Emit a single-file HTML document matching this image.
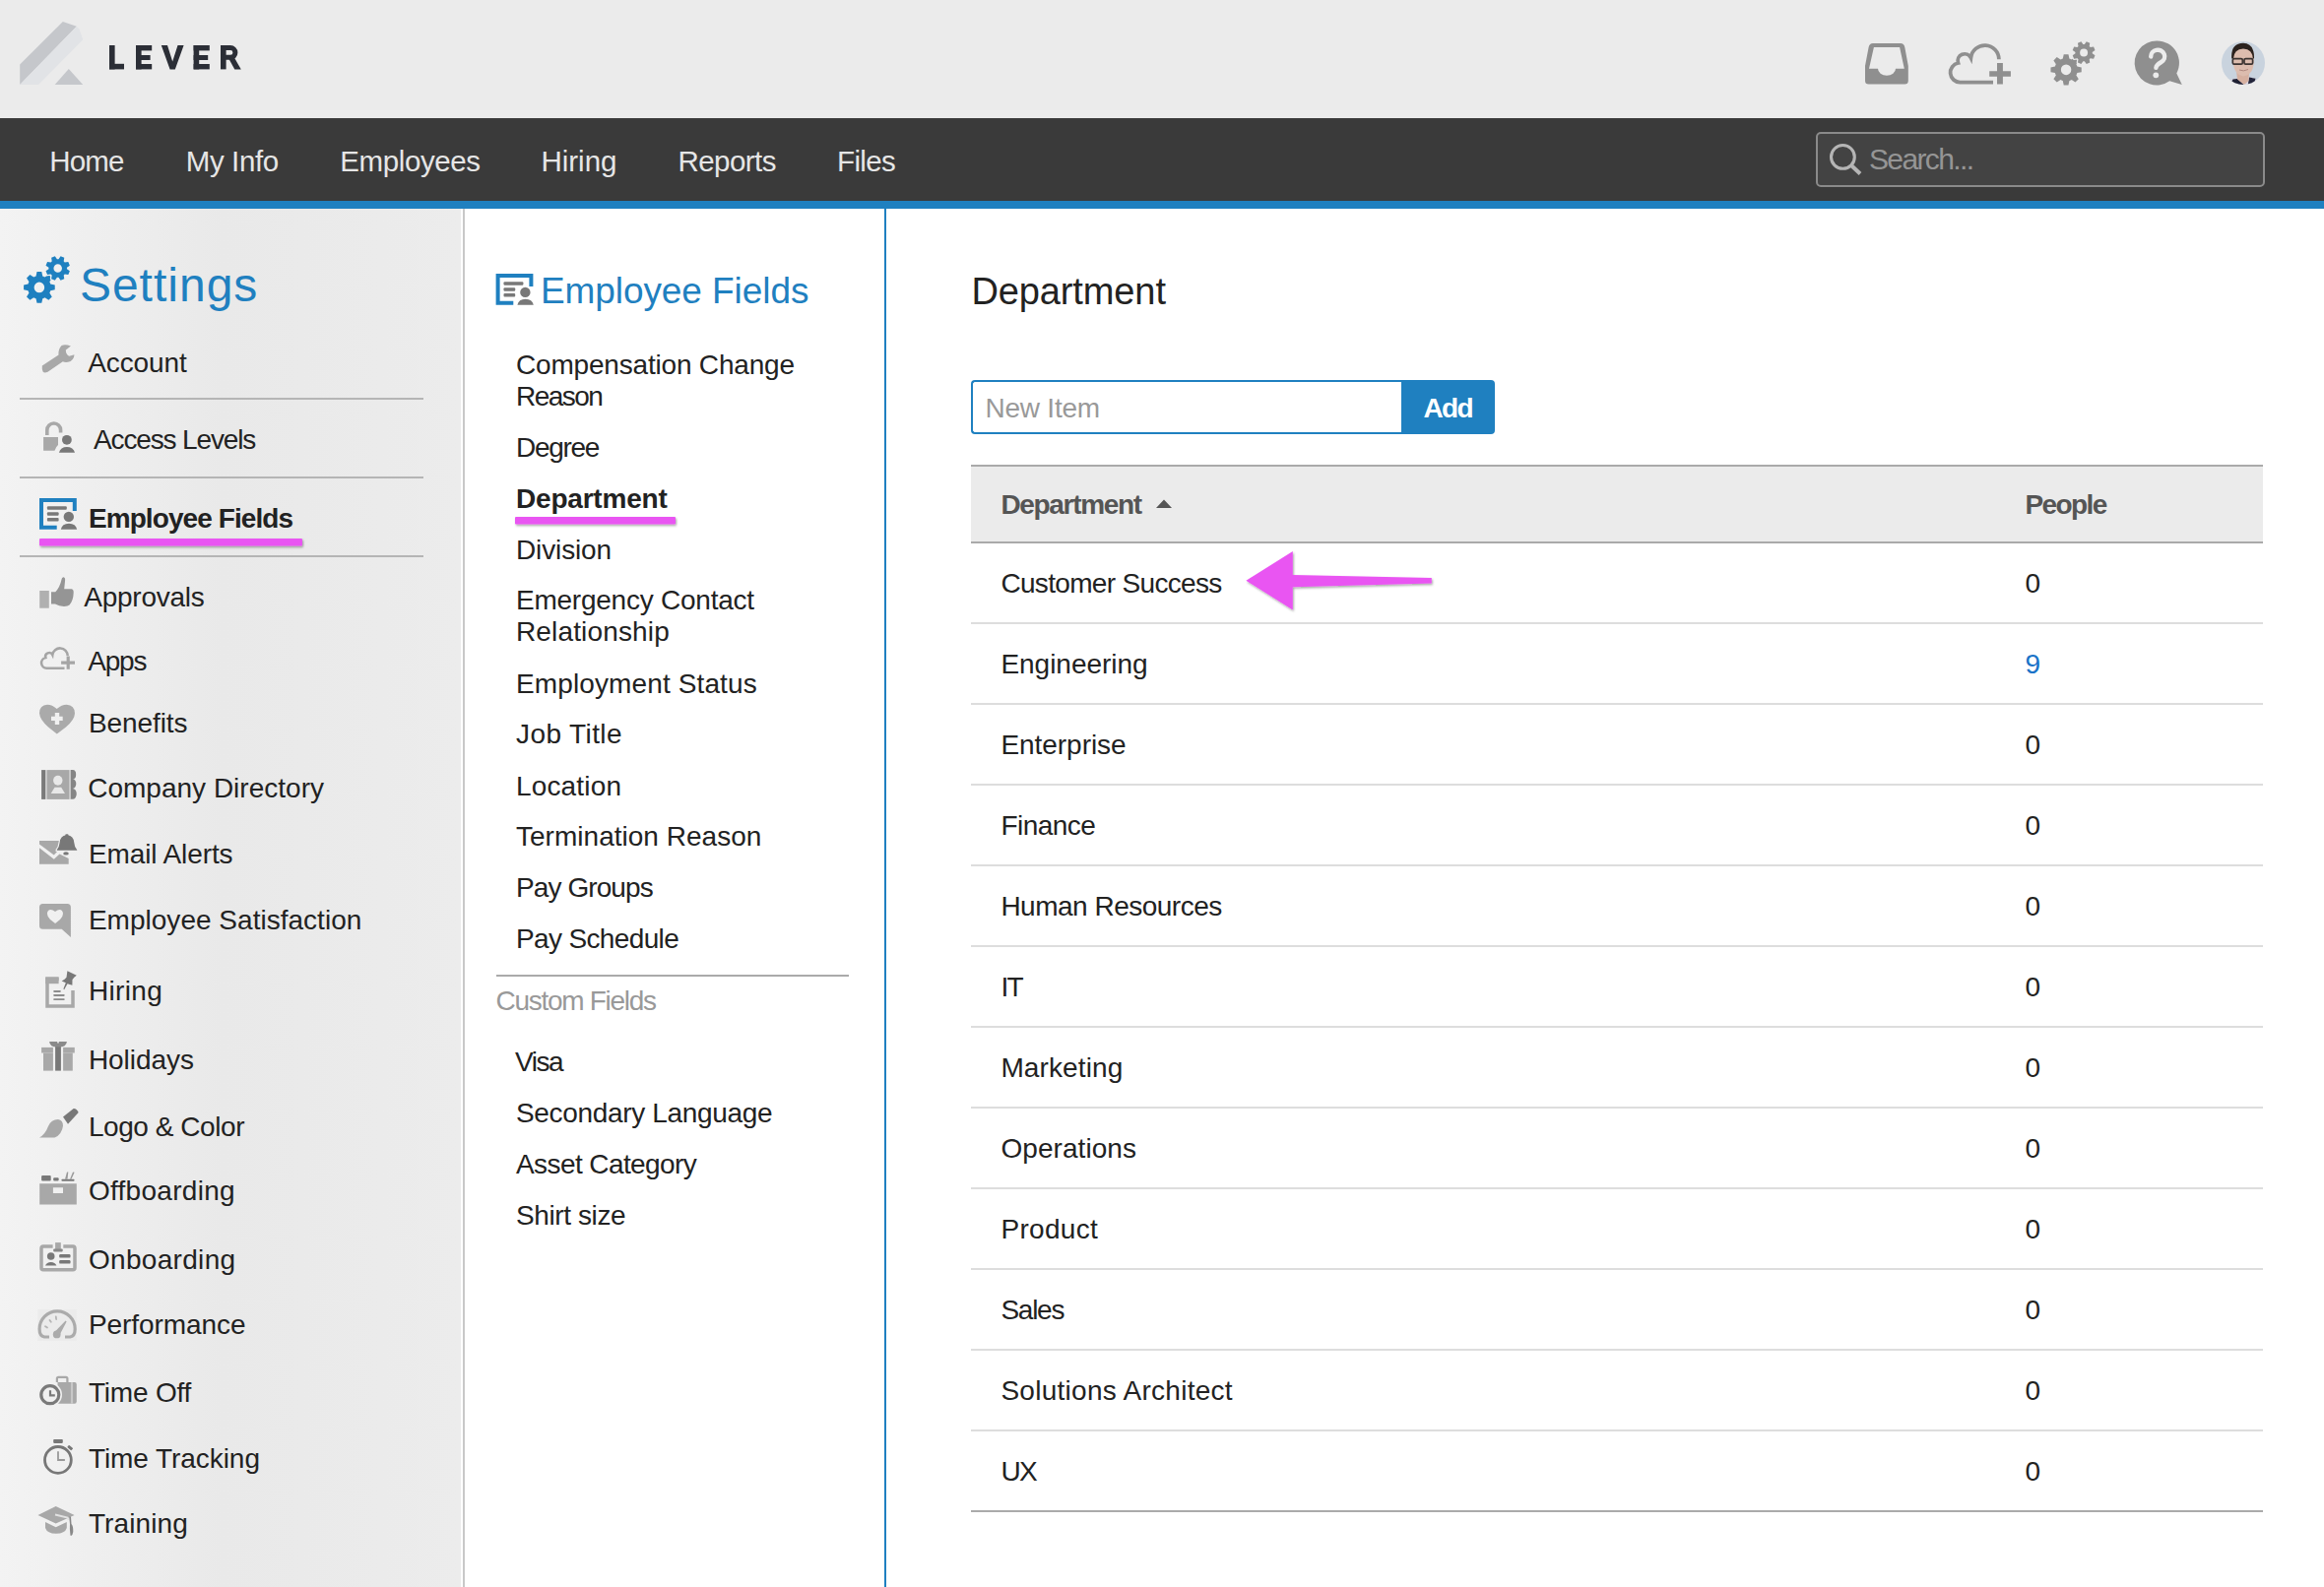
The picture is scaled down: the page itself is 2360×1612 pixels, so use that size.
<!DOCTYPE html>
<html><head><meta charset="utf-8"><title>Settings - Employee Fields</title>
<style>
html,body{margin:0;padding:0;width:2360px;height:1612px;overflow:hidden;background:#fff;font-family:"Liberation Sans",sans-serif;}
.b{position:absolute;}
.t{position:absolute;white-space:nowrap;font-family:"Liberation Sans",sans-serif;}
</style></head><body>
<div class="b" style="left:0;top:0;width:2360px;height:120px;background:#ebebeb"></div>
<div class="b" style="left:0;top:120px;width:2360px;height:84px;background:#3a3a3a"></div>
<div class="b" style="left:0;top:204px;width:2360px;height:8px;background:#1f80c0"></div>
<div class="b" style="left:1844px;top:133.8px;width:452px;height:52px;border:2.2px solid #8a8a8a;border-radius:5px;background:#434343"></div>
<div class="b" style="left:0;top:212px;width:468px;height:1400px;background:linear-gradient(to right,#f3f3f3 0px,#e9e9e9 225px,#ececec 468px)"></div>
<div class="b" style="left:470px;top:212px;width:2px;height:1400px;background:#c8c8c8"></div>
<div class="b" style="left:898px;top:212px;width:2px;height:1400px;background:#1f80c0"></div>
<div class="b" style="left:20px;top:404px;width:410px;height:2px;background:#b5b5b5"></div>
<div class="b" style="left:20px;top:484px;width:410px;height:2px;background:#b5b5b5"></div>
<div class="b" style="left:20px;top:564px;width:410px;height:2px;background:#b5b5b5"></div>
<div class="b" style="left:504px;top:990px;width:358px;height:2px;background:#aaaaaa"></div>
<div class="b" style="left:986px;top:386px;width:435px;height:51px;border:2px solid #1f80c0;border-right:none;border-radius:4px 0 0 4px;background:#fff"></div>
<div class="b" style="left:1423px;top:386px;width:95px;height:55px;background:#1f80c0;border-radius:0 4px 4px 0"></div>
<div class="b" style="left:986px;top:472px;width:1312px;height:2px;background:#aaaaaa"></div>
<div class="b" style="left:986px;top:474px;width:1312px;height:76px;background:#ebebeb"></div>
<div class="b" style="left:986px;top:550px;width:1312px;height:2px;background:#aaaaaa"></div>
<div class="b" style="left:986px;top:632px;width:1312px;height:2px;background:#dddddd"></div>
<div class="b" style="left:986px;top:714px;width:1312px;height:2px;background:#dddddd"></div>
<div class="b" style="left:986px;top:796px;width:1312px;height:2px;background:#dddddd"></div>
<div class="b" style="left:986px;top:878px;width:1312px;height:2px;background:#dddddd"></div>
<div class="b" style="left:986px;top:960px;width:1312px;height:2px;background:#dddddd"></div>
<div class="b" style="left:986px;top:1042px;width:1312px;height:2px;background:#dddddd"></div>
<div class="b" style="left:986px;top:1124px;width:1312px;height:2px;background:#dddddd"></div>
<div class="b" style="left:986px;top:1206px;width:1312px;height:2px;background:#dddddd"></div>
<div class="b" style="left:986px;top:1288px;width:1312px;height:2px;background:#dddddd"></div>
<div class="b" style="left:986px;top:1370px;width:1312px;height:2px;background:#dddddd"></div>
<div class="b" style="left:986px;top:1452px;width:1312px;height:2px;background:#dddddd"></div>
<div class="b" style="left:986px;top:1534px;width:1312px;height:2px;background:#aaaaaa"></div>
<div class="t" style="left:50.2px;top:149.1px;font-size:29.5px;line-height:29.5px;color:#e6e6e6;letter-spacing:-0.80px;">Home</div>
<div class="t" style="left:188.7px;top:149.1px;font-size:29.5px;line-height:29.5px;color:#e6e6e6;letter-spacing:-0.38px;">My Info</div>
<div class="t" style="left:345.3px;top:149.1px;font-size:29.5px;line-height:29.5px;color:#e6e6e6;letter-spacing:-0.40px;">Employees</div>
<div class="t" style="left:549.4px;top:149.1px;font-size:29.5px;line-height:29.5px;color:#e6e6e6;">Hiring</div>
<div class="t" style="left:688.4px;top:149.1px;font-size:29.5px;line-height:29.5px;color:#e6e6e6;letter-spacing:-0.53px;">Reports</div>
<div class="t" style="left:850.1px;top:149.1px;font-size:29.5px;line-height:29.5px;color:#e6e6e6;letter-spacing:-0.68px;">Files</div>
<div class="t" style="left:1897.9px;top:147.0px;font-size:30px;line-height:30px;color:#959595;letter-spacing:-1.60px;">Search...</div>
<div class="t" style="left:80.9px;top:266.0px;font-size:48px;line-height:48px;color:#1f80c0;letter-spacing:1.00px;">Settings</div>
<div class="t" style="left:89.2px;top:354.5px;font-size:28px;line-height:28px;color:#222;letter-spacing:-0.10px;">Account</div>
<div class="t" style="left:95.0px;top:432.5px;font-size:28px;line-height:28px;color:#222;letter-spacing:-1.14px;">Access Levels</div>
<div class="t" style="left:85.3px;top:593.1px;font-size:28px;line-height:28px;color:#222;letter-spacing:-0.25px;">Approvals</div>
<div class="t" style="left:89.2px;top:657.5px;font-size:28px;line-height:28px;color:#222;letter-spacing:-1.17px;">Apps</div>
<div class="t" style="left:89.9px;top:720.5px;font-size:28px;line-height:28px;color:#222;letter-spacing:-0.07px;">Benefits</div>
<div class="t" style="left:89.2px;top:786.5px;font-size:28px;line-height:28px;color:#222;letter-spacing:0.01px;">Company Directory</div>
<div class="t" style="left:89.9px;top:853.5px;font-size:28px;line-height:28px;color:#222;letter-spacing:-0.10px;">Email Alerts</div>
<div class="t" style="left:89.9px;top:920.5px;font-size:28px;line-height:28px;color:#222;letter-spacing:0.02px;">Employee Satisfaction</div>
<div class="t" style="left:89.9px;top:992.5px;font-size:28px;line-height:28px;color:#222;letter-spacing:0.34px;">Hiring</div>
<div class="t" style="left:89.9px;top:1062.5px;font-size:28px;line-height:28px;color:#222;letter-spacing:-0.04px;">Holidays</div>
<div class="t" style="left:89.9px;top:1130.5px;font-size:28px;line-height:28px;color:#222;letter-spacing:-0.44px;">Logo &amp; Color</div>
<div class="t" style="left:89.9px;top:1196.1px;font-size:28px;line-height:28px;color:#222;letter-spacing:0.29px;">Offboarding</div>
<div class="t" style="left:89.9px;top:1266.2px;font-size:28px;line-height:28px;color:#222;letter-spacing:0.32px;">Onboarding</div>
<div class="t" style="left:89.9px;top:1332.3px;font-size:28px;line-height:28px;color:#222;letter-spacing:-0.06px;">Performance</div>
<div class="t" style="left:89.9px;top:1400.5px;font-size:28px;line-height:28px;color:#222;letter-spacing:-0.19px;">Time Off</div>
<div class="t" style="left:89.9px;top:1468.2px;font-size:28px;line-height:28px;color:#222;letter-spacing:-0.06px;">Time Tracking</div>
<div class="t" style="left:89.9px;top:1534.0px;font-size:28px;line-height:28px;color:#222;letter-spacing:0.11px;">Training</div>
<div class="t" style="left:89.9px;top:512.5px;font-size:28px;line-height:28px;color:#222;font-weight:bold;letter-spacing:-0.91px;">Employee Fields</div>
<div class="t" style="left:548.9px;top:277.4px;font-size:37px;line-height:37px;color:#1f80c0;letter-spacing:-0.07px;">Employee Fields</div>
<div class="t" style="left:524.0px;top:356.5px;font-size:28px;line-height:28px;color:#222;letter-spacing:-0.19px;">Compensation Change</div>
<div class="t" style="left:524.0px;top:389.0px;font-size:28px;line-height:28px;color:#222;letter-spacing:-1.54px;">Reason</div>
<div class="t" style="left:524.0px;top:440.5px;font-size:28px;line-height:28px;color:#222;letter-spacing:-1.30px;">Degree</div>
<div class="t" style="left:524.0px;top:544.5px;font-size:28px;line-height:28px;color:#222;letter-spacing:-0.13px;">Division</div>
<div class="t" style="left:524.0px;top:596.3px;font-size:28px;line-height:28px;color:#222;letter-spacing:-0.24px;">Emergency Contact</div>
<div class="t" style="left:524.0px;top:628.3px;font-size:28px;line-height:28px;color:#222;letter-spacing:0.15px;">Relationship</div>
<div class="t" style="left:524.0px;top:680.5px;font-size:28px;line-height:28px;color:#222;letter-spacing:0.12px;">Employment Status</div>
<div class="t" style="left:524.0px;top:732.2px;font-size:28px;line-height:28px;color:#222;letter-spacing:0.41px;">Job Title</div>
<div class="t" style="left:524.0px;top:784.5px;font-size:28px;line-height:28px;color:#222;letter-spacing:0.16px;">Location</div>
<div class="t" style="left:524.0px;top:836.3px;font-size:28px;line-height:28px;color:#222;letter-spacing:0.02px;">Termination Reason</div>
<div class="t" style="left:524.0px;top:888.0px;font-size:28px;line-height:28px;color:#222;letter-spacing:-0.91px;">Pay Groups</div>
<div class="t" style="left:524.0px;top:940.2px;font-size:28px;line-height:28px;color:#222;letter-spacing:-0.64px;">Pay Schedule</div>
<div class="t" style="left:523.0px;top:1064.5px;font-size:28px;line-height:28px;color:#222;letter-spacing:-1.50px;">Visa</div>
<div class="t" style="left:524.0px;top:1116.5px;font-size:28px;line-height:28px;color:#222;letter-spacing:-0.33px;">Secondary Language</div>
<div class="t" style="left:524.0px;top:1168.5px;font-size:28px;line-height:28px;color:#222;letter-spacing:-0.59px;">Asset Category</div>
<div class="t" style="left:524.0px;top:1220.5px;font-size:28px;line-height:28px;color:#222;letter-spacing:-0.39px;">Shirt size</div>
<div class="t" style="left:524.0px;top:492.5px;font-size:28px;line-height:28px;color:#222;font-weight:bold;letter-spacing:-0.20px;">Department</div>
<div class="t" style="left:503.5px;top:1002.5px;font-size:28px;line-height:28px;color:#999;letter-spacing:-1.29px;">Custom Fields</div>
<div class="t" style="left:986.4px;top:277.0px;font-size:38px;line-height:38px;color:#222;letter-spacing:-0.11px;">Department</div>
<div class="t" style="left:1000.4px;top:400.5px;font-size:28px;line-height:28px;color:#999;letter-spacing:-0.21px;">New Item</div>
<div class="t" style="left:1445.4px;top:400.5px;font-size:28px;line-height:28px;color:#fff;font-weight:bold;letter-spacing:-1.60px;">Add</div>
<div class="t" style="left:1016.4px;top:498.5px;font-size:28px;line-height:28px;color:#555;font-weight:bold;letter-spacing:-1.31px;">Department</div>
<div class="t" style="left:2056.4px;top:498.5px;font-size:28px;line-height:28px;color:#555;font-weight:bold;letter-spacing:-1.60px;">People</div>
<div class="t" style="left:1016.4px;top:578.5px;font-size:28px;line-height:28px;color:#222;letter-spacing:-0.67px;">Customer Success</div>
<div class="t" style="left:2056.4px;top:578.5px;font-size:28px;line-height:28px;color:#222;">0</div>
<div class="t" style="left:1016.4px;top:660.5px;font-size:28px;line-height:28px;color:#222;letter-spacing:-0.02px;">Engineering</div>
<div class="t" style="left:2056.4px;top:660.5px;font-size:28px;line-height:28px;color:#1a73c8;">9</div>
<div class="t" style="left:1016.4px;top:742.5px;font-size:28px;line-height:28px;color:#222;letter-spacing:-0.04px;">Enterprise</div>
<div class="t" style="left:2056.4px;top:742.5px;font-size:28px;line-height:28px;color:#222;">0</div>
<div class="t" style="left:1016.4px;top:824.5px;font-size:28px;line-height:28px;color:#222;letter-spacing:-0.53px;">Finance</div>
<div class="t" style="left:2056.4px;top:824.5px;font-size:28px;line-height:28px;color:#222;">0</div>
<div class="t" style="left:1016.4px;top:906.5px;font-size:28px;line-height:28px;color:#222;letter-spacing:-0.50px;">Human Resources</div>
<div class="t" style="left:2056.4px;top:906.5px;font-size:28px;line-height:28px;color:#222;">0</div>
<div class="t" style="left:1016.4px;top:988.5px;font-size:28px;line-height:28px;color:#222;letter-spacing:-1.60px;">IT</div>
<div class="t" style="left:2056.4px;top:988.5px;font-size:28px;line-height:28px;color:#222;">0</div>
<div class="t" style="left:1016.4px;top:1070.5px;font-size:28px;line-height:28px;color:#222;letter-spacing:0.12px;">Marketing</div>
<div class="t" style="left:2056.4px;top:1070.5px;font-size:28px;line-height:28px;color:#222;">0</div>
<div class="t" style="left:1016.4px;top:1152.5px;font-size:28px;line-height:28px;color:#222;letter-spacing:0.07px;">Operations</div>
<div class="t" style="left:2056.4px;top:1152.5px;font-size:28px;line-height:28px;color:#222;">0</div>
<div class="t" style="left:1016.4px;top:1234.5px;font-size:28px;line-height:28px;color:#222;letter-spacing:0.32px;">Product</div>
<div class="t" style="left:2056.4px;top:1234.5px;font-size:28px;line-height:28px;color:#222;">0</div>
<div class="t" style="left:1016.4px;top:1316.5px;font-size:28px;line-height:28px;color:#222;letter-spacing:-1.25px;">Sales</div>
<div class="t" style="left:2056.4px;top:1316.5px;font-size:28px;line-height:28px;color:#222;">0</div>
<div class="t" style="left:1016.4px;top:1398.5px;font-size:28px;line-height:28px;color:#222;letter-spacing:0.27px;">Solutions Architect</div>
<div class="t" style="left:2056.4px;top:1398.5px;font-size:28px;line-height:28px;color:#222;">0</div>
<div class="t" style="left:1016.4px;top:1480.5px;font-size:28px;line-height:28px;color:#222;letter-spacing:-1.60px;">UX</div>
<div class="t" style="left:2056.4px;top:1480.5px;font-size:28px;line-height:28px;color:#222;">0</div>
<svg class="b" style="left:0;top:0" width="2360" height="1612" viewBox="0 0 2360 1612">
<polygon fill="#c5c7cb" points="20.2,65.6 63.8,22 77.8,26.8 20.2,86"/>
<polygon fill="#e1e3e6" points="20.2,86 77.8,26.8 80.5,29.5 84.2,40.3 39,86"/>
<polygon fill="#c5c7cb" points="55.7,86 69.8,70 84.2,86"/>
<g fill="#2b2e36"><rect x="111" y="46" width="5.6" height="24.4"/><rect x="111" y="64.8" width="15" height="5.6"/><rect x="138" y="46" width="5.6" height="24.4"/><rect x="138" y="46" width="16.2" height="5.4"/><rect x="138" y="56" width="14.6" height="5"/><rect x="138" y="65" width="16.2" height="5.4"/><polygon points="163.8,46 170,46 175.2,62.5 180.5,46 186.6,46 177.8,70.4 172.6,70.4"/><rect x="196.6" y="46" width="5.6" height="24.4"/><rect x="196.6" y="46" width="16.2" height="5.4"/><rect x="196.6" y="56" width="14.6" height="5"/><rect x="196.6" y="65" width="16.2" height="5.4"/><rect x="224" y="46" width="5.6" height="24.4"/><path d="M224,46 h10 a7.4,7.4 0 0 1 0,14.8 h-10 v-5 h10 a2.4,2.4 0 0 0 0,-4.8 h-10z"/><polygon points="232,59 238.2,59 244.8,70.4 238.3,70.4"/></g>
<path fill="#8f8f8f" fill-rule="evenodd" d="M1902,44.1 L1930,44.1 Q1933.5,44.1 1934.3,48 L1937.8,67 L1937.8,82 Q1937.8,85.6 1934.2,85.6 L1897.6,85.6 Q1894,85.6 1894,82 L1894,67 L1897.6,48 Q1898.4,44.1 1902,44.1 Z M1902.9,48 L1898,69.8 L1907,69.8 A9,7 0 0 0 1925,69.8 L1933.8,69.8 L1929.1,48 Z"/>
<path fill="none" stroke="#8f8f8f" stroke-width="3.8" d="M2024,83.6 L1990.4,83.6 A9.9,9.9 0 0 1 1988.5,64.0 A7,7 0 0 1 2001.4,58.66 A14.3,14.3 0 0 1 2029.9,60.3"/>
<path fill="#8f8f8f" d="M2028,64.1 h5.9 v8.1 h8 v5.6 h-8 v7.8 h-5.9 v-7.8 h-7.8 v-5.6 h7.8z"/>
<path fill="#8f8f8f" fill-rule="evenodd" d="M2109.31,74.12 L2113.72,73.17 L2113.72,68.43 L2109.31,67.48 L2109.19,67.09 L2109.05,66.71 L2108.90,66.33 L2108.74,65.95 L2108.56,65.58 L2108.37,65.22 L2110.82,61.43 L2107.47,58.08 L2103.68,60.53 L2103.32,60.34 L2102.95,60.16 L2102.57,60.00 L2102.19,59.85 L2101.81,59.71 L2101.42,59.59 L2100.47,55.18 L2095.73,55.18 L2094.78,59.59 L2094.39,59.71 L2094.01,59.85 L2093.63,60.00 L2093.25,60.16 L2092.88,60.34 L2092.52,60.53 L2088.73,58.08 L2085.38,61.43 L2087.83,65.22 L2087.64,65.58 L2087.46,65.95 L2087.30,66.33 L2087.15,66.71 L2087.01,67.09 L2086.89,67.48 L2082.48,68.43 L2082.48,73.17 L2086.89,74.12 L2087.01,74.51 L2087.15,74.89 L2087.30,75.27 L2087.46,75.65 L2087.64,76.02 L2087.83,76.38 L2085.38,80.17 L2088.73,83.52 L2092.52,81.07 L2092.88,81.26 L2093.25,81.44 L2093.63,81.60 L2094.01,81.75 L2094.39,81.89 L2094.78,82.01 L2095.73,86.42 L2100.47,86.42 L2101.42,82.01 L2101.81,81.89 L2102.19,81.75 L2102.57,81.60 L2102.95,81.44 L2103.32,81.26 L2103.68,81.07 L2107.47,83.52 L2110.82,80.17 L2108.37,76.38 L2108.56,76.02 L2108.74,75.65 L2108.90,75.27 L2109.05,74.89 L2109.19,74.51Z M2103.31,70.80 A5.214,5.214 0 1,0 2092.89,70.80 A5.214,5.214 0 1,0 2103.31,70.80Z"/><path fill="#ebebeb" stroke="#ebebeb" stroke-width="2.6" stroke-linejoin="round" d="M2124.73,52.88 L2127.49,50.91 L2126.05,47.45 L2122.71,48.01 L2122.55,47.83 L2122.39,47.65 L2122.22,47.48 L2122.05,47.31 L2121.87,47.15 L2121.69,46.99 L2122.25,43.65 L2118.79,42.21 L2116.82,44.97 L2116.58,44.96 L2116.34,44.95 L2116.10,44.94 L2115.86,44.95 L2115.62,44.96 L2115.38,44.97 L2113.41,42.21 L2109.95,43.65 L2110.51,46.99 L2110.33,47.15 L2110.15,47.31 L2109.98,47.48 L2109.81,47.65 L2109.65,47.83 L2109.49,48.01 L2106.15,47.45 L2104.71,50.91 L2107.47,52.88 L2107.46,53.12 L2107.45,53.36 L2107.44,53.60 L2107.45,53.84 L2107.46,54.08 L2107.47,54.32 L2104.71,56.29 L2106.15,59.75 L2109.49,59.19 L2109.65,59.37 L2109.81,59.55 L2109.98,59.72 L2110.15,59.89 L2110.33,60.05 L2110.51,60.21 L2109.95,63.55 L2113.41,64.99 L2115.38,62.23 L2115.62,62.24 L2115.86,62.25 L2116.10,62.26 L2116.34,62.25 L2116.58,62.24 L2116.82,62.23 L2118.79,64.99 L2122.25,63.55 L2121.69,60.21 L2121.87,60.05 L2122.05,59.89 L2122.22,59.72 L2122.39,59.55 L2122.55,59.37 L2122.71,59.19 L2126.05,59.75 L2127.49,56.29 L2124.73,54.32 L2124.74,54.08 L2124.75,53.84 L2124.76,53.60 L2124.75,53.36 L2124.74,53.12Z"/><path fill="#8f8f8f" fill-rule="evenodd" d="M2124.73,52.88 L2127.49,50.91 L2126.05,47.45 L2122.71,48.01 L2122.55,47.83 L2122.39,47.65 L2122.22,47.48 L2122.05,47.31 L2121.87,47.15 L2121.69,46.99 L2122.25,43.65 L2118.79,42.21 L2116.82,44.97 L2116.58,44.96 L2116.34,44.95 L2116.10,44.94 L2115.86,44.95 L2115.62,44.96 L2115.38,44.97 L2113.41,42.21 L2109.95,43.65 L2110.51,46.99 L2110.33,47.15 L2110.15,47.31 L2109.98,47.48 L2109.81,47.65 L2109.65,47.83 L2109.49,48.01 L2106.15,47.45 L2104.71,50.91 L2107.47,52.88 L2107.46,53.12 L2107.45,53.36 L2107.44,53.60 L2107.45,53.84 L2107.46,54.08 L2107.47,54.32 L2104.71,56.29 L2106.15,59.75 L2109.49,59.19 L2109.65,59.37 L2109.81,59.55 L2109.98,59.72 L2110.15,59.89 L2110.33,60.05 L2110.51,60.21 L2109.95,63.55 L2113.41,64.99 L2115.38,62.23 L2115.62,62.24 L2115.86,62.25 L2116.10,62.26 L2116.34,62.25 L2116.58,62.24 L2116.82,62.23 L2118.79,64.99 L2122.25,63.55 L2121.69,60.21 L2121.87,60.05 L2122.05,59.89 L2122.22,59.72 L2122.39,59.55 L2122.55,59.37 L2122.71,59.19 L2126.05,59.75 L2127.49,56.29 L2124.73,54.32 L2124.74,54.08 L2124.75,53.84 L2124.76,53.60 L2124.75,53.36 L2124.74,53.12Z M2120.08,53.60 A3.978,3.978 0 1,0 2112.12,53.60 A3.978,3.978 0 1,0 2120.08,53.60Z"/>
<path fill="#8f8f8f" d="M2190.5,41.4 A22.5,22.5 0 1 0 2203.2,82.2 L2215.8,86 L2210.3,74.5 A22.5,22.5 0 0 0 2190.5,41.4Z"/>
<path fill="none" stroke="#ececec" stroke-width="4.4" stroke-linecap="round" d="M2184.2,57.5 A7,6.6 0 1 1 2194.8,63 Q2189.6,66 2189.4,68.8"/>
<circle cx="2189.3" cy="76.3" r="2.9" fill="#ececec"/>
<defs><clipPath id="av"><circle cx="2278" cy="64" r="22"/></clipPath></defs>
<g clip-path="url(#av)"><rect x="2250" y="40" width="60" height="50" fill="#c9d3de"/><path d="M2258,92 L2266,80.5 Q2272,78.5 2278,79 Q2285,78 2290,79.5 L2300,92Z" fill="#d9d4df"/><path d="M2262,92 L2267.5,80.4 L2272,80 L2279,86.5 L2279,92Z" fill="#1f2033"/><path d="M2284,78.5 L2290.5,79.8 L2287,92 L2282,92Z" fill="#23253a"/><path d="M2271,72 L2284,72 L2283.5,82 L2279,86 L2272,80.5Z" fill="#d6b0a0"/><path d="M2267.7,54 Q2268,49 2278,49 Q2288.5,49 2288.9,56 L2288.5,66 Q2287,76 2278,77.5 Q2269.5,76 2268,66Z" fill="#dcbcae"/><path d="M2266.2,59.6 Q2265,44 2278,43.7 Q2289.5,44 2289,59.6 L2287.8,59.6 Q2287.5,50 2278,49.5 Q2268.5,50 2268,59.6Z" fill="#2b221e"/><rect x="2267.3" y="59.6" width="10" height="5.6" rx="1.4" fill="none" stroke="#3b3331" stroke-width="1.7"/><rect x="2279" y="59.6" width="8.6" height="5.6" rx="1.4" fill="none" stroke="#3b3331" stroke-width="1.7"/><path d="M2274,71 Q2278,73 2283,70.5" fill="none" stroke="#b08a80" stroke-width="1"/></g>
<circle cx="1871.4" cy="159.4" r="11.9" fill="none" stroke="#b5b5b5" stroke-width="3.1"/>
<line x1="1880.5" y1="168.5" x2="1889" y2="176.5" stroke="#b5b5b5" stroke-width="4"/>
<path fill="#1f80c0" fill-rule="evenodd" d="M51.25,295.26 L55.72,294.30 L55.72,289.50 L51.25,288.54 L51.13,288.14 L50.99,287.75 L50.84,287.37 L50.67,286.99 L50.50,286.62 L50.30,286.25 L52.78,282.41 L49.39,279.02 L45.55,281.50 L45.18,281.30 L44.81,281.13 L44.43,280.96 L44.05,280.81 L43.66,280.67 L43.26,280.55 L42.30,276.08 L37.50,276.08 L36.54,280.55 L36.14,280.67 L35.75,280.81 L35.37,280.96 L34.99,281.13 L34.62,281.30 L34.25,281.50 L30.41,279.02 L27.02,282.41 L29.50,286.25 L29.30,286.62 L29.13,286.99 L28.96,287.37 L28.81,287.75 L28.67,288.14 L28.55,288.54 L24.08,289.50 L24.08,294.30 L28.55,295.26 L28.67,295.66 L28.81,296.05 L28.96,296.43 L29.13,296.81 L29.30,297.18 L29.50,297.55 L27.02,301.39 L30.41,304.78 L34.25,302.30 L34.62,302.50 L34.99,302.67 L35.37,302.84 L35.75,302.99 L36.14,303.13 L36.54,303.25 L37.50,307.72 L42.30,307.72 L43.26,303.25 L43.66,303.13 L44.05,302.99 L44.43,302.84 L44.81,302.67 L45.18,302.50 L45.55,302.30 L49.39,304.78 L52.78,301.39 L50.30,297.55 L50.50,297.18 L50.67,296.81 L50.84,296.43 L50.99,296.05 L51.13,295.66Z M45.18,291.90 A5.28,5.28 0 1,0 34.62,291.90 A5.28,5.28 0 1,0 45.18,291.90Z"/><path fill="#f0f0f0" stroke="#f0f0f0" stroke-width="2.6" stroke-linejoin="round" d="M67.92,271.73 L70.87,269.63 L69.33,265.93 L65.76,266.53 L65.60,266.33 L65.42,266.14 L65.24,265.96 L65.06,265.78 L64.87,265.60 L64.67,265.44 L65.27,261.87 L61.57,260.33 L59.47,263.28 L59.22,263.26 L58.96,263.25 L58.70,263.25 L58.44,263.25 L58.18,263.26 L57.93,263.28 L55.83,260.33 L52.13,261.87 L52.73,265.44 L52.53,265.60 L52.34,265.78 L52.16,265.96 L51.98,266.14 L51.80,266.33 L51.64,266.53 L48.07,265.93 L46.53,269.63 L49.48,271.73 L49.46,271.98 L49.45,272.24 L49.45,272.50 L49.45,272.76 L49.46,273.02 L49.48,273.27 L46.53,275.37 L48.07,279.07 L51.64,278.47 L51.80,278.67 L51.98,278.86 L52.16,279.04 L52.34,279.22 L52.53,279.40 L52.73,279.56 L52.13,283.13 L55.83,284.67 L57.93,281.72 L58.18,281.74 L58.44,281.75 L58.70,281.75 L58.96,281.75 L59.22,281.74 L59.47,281.72 L61.57,284.67 L65.27,283.13 L64.67,279.56 L64.87,279.40 L65.06,279.22 L65.24,279.04 L65.42,278.86 L65.60,278.67 L65.76,278.47 L69.33,279.07 L70.87,275.37 L67.92,273.27 L67.94,273.02 L67.95,272.76 L67.95,272.50 L67.95,272.24 L67.94,271.98Z"/><path fill="#1f80c0" fill-rule="evenodd" d="M67.92,271.73 L70.87,269.63 L69.33,265.93 L65.76,266.53 L65.60,266.33 L65.42,266.14 L65.24,265.96 L65.06,265.78 L64.87,265.60 L64.67,265.44 L65.27,261.87 L61.57,260.33 L59.47,263.28 L59.22,263.26 L58.96,263.25 L58.70,263.25 L58.44,263.25 L58.18,263.26 L57.93,263.28 L55.83,260.33 L52.13,261.87 L52.73,265.44 L52.53,265.60 L52.34,265.78 L52.16,265.96 L51.98,266.14 L51.80,266.33 L51.64,266.53 L48.07,265.93 L46.53,269.63 L49.48,271.73 L49.46,271.98 L49.45,272.24 L49.45,272.50 L49.45,272.76 L49.46,273.02 L49.48,273.27 L46.53,275.37 L48.07,279.07 L51.64,278.47 L51.80,278.67 L51.98,278.86 L52.16,279.04 L52.34,279.22 L52.53,279.40 L52.73,279.56 L52.13,283.13 L55.83,284.67 L57.93,281.72 L58.18,281.74 L58.44,281.75 L58.70,281.75 L58.96,281.75 L59.22,281.74 L59.47,281.72 L61.57,284.67 L65.27,283.13 L64.67,279.56 L64.87,279.40 L65.06,279.22 L65.24,279.04 L65.42,278.86 L65.60,278.67 L65.76,278.47 L69.33,279.07 L70.87,275.37 L67.92,273.27 L67.94,273.02 L67.95,272.76 L67.95,272.50 L67.95,272.24 L67.94,271.98Z M62.95,272.50 A4.25,4.25 0 1,0 54.45,272.50 A4.25,4.25 0 1,0 62.95,272.50Z"/>
<path fill="#a8a8a8" d="M42.8,371.5 L59.5,360.5 Q59,354.5 62.5,351 Q66.5,349.4 71.9,351.6 L66.8,355.5 Q66.8,359.8 70.2,361.8 L75.5,360.2 Q75,366.5 69,367.8 Q65.5,368.2 63.8,367.2 L48.5,377.8 Q45,379.5 43.6,377.5 Q42.4,374.5 42.8,371.5 Z"/>
<path fill="none" stroke="#a8a8a8" stroke-width="3.6" d="M47.8,442 L47.8,436.9 A6.9,6.9 0 0 1 61.6,436.9 L61.6,439.5"/>
<path fill="#a8a8a8" d="M44.1,444 L59,444 L59,452 Q56.5,454 55.5,457.8 L44.1,457.8Z"/>
<circle cx="67.9" cy="446.8" r="4.9" fill="#787878"/><path fill="#787878" d="M59.9,459.7 Q61.5,454 67.9,454 Q74.4,454 76,459.7Z"/>
<g transform="translate(0,0)"><path fill="none" stroke="#1f80c0" stroke-width="4" d="M57.7,535.8 L42,535.8 L42,508 L75.8,508 L75.8,518.9"/><g fill="#787878"><rect x="47.9" y="514.2" width="19.9" height="3.5" rx="1"/><rect x="47.9" y="520.2" width="11.7" height="3.5" rx="1"/><rect x="47.9" y="526.1" width="11.7" height="3.5" rx="1"/><circle cx="69.8" cy="524.9" r="5.2"/><path d="M61.8,537.8 Q63,531.8 70,531.8 Q77,531.8 78.2,537.8Z"/></g></g>
<g transform="translate(463.6,-228)"><path fill="none" stroke="#1f80c0" stroke-width="4" d="M57.7,535.8 L42,535.8 L42,508 L75.8,508 L75.8,518.9"/><g fill="#787878"><rect x="47.9" y="514.2" width="19.9" height="3.5" rx="1"/><rect x="47.9" y="520.2" width="11.7" height="3.5" rx="1"/><rect x="47.9" y="526.1" width="11.7" height="3.5" rx="1"/><circle cx="69.8" cy="524.9" r="5.2"/><path d="M61.8,537.8 Q63,531.8 70,531.8 Q77,531.8 78.2,537.8Z"/></g></g>
<rect x="40.2" y="600" width="9.6" height="17.7" fill="#b0b0b0"/>
<path fill="#959595" d="M52,601.3 L56.3,601.3 Q61,596 62.4,589 Q62.8,586 64.6,586.2 Q66.6,586.6 66,590.5 L65.2,598.2 L72.8,598.2 Q74.9,598.6 74.7,602 Q74.5,610 70.5,614.5 Q69,615.9 65,615.9 Q60,615.8 56,613.6 L52,613.6Z"/>
<path fill="none" stroke="#a5a5a5" stroke-width="4.7" transform="translate(41,679.7) scale(0.54) translate(-1978.6,-85.5)" d="M2024,83.6 L1990.4,83.6 A9.9,9.9 0 0 1 1988.5,64.0 A7,7 0 0 1 2001.4,58.66 A14.3,14.3 0 0 1 2029.9,60.3"/>
<path fill="#a5a5a5" d="M67.6,666.4 h3.2 v5.1 h5.2 v3.3 h-5.2 v5 h-3.2 v-5 h-5.5 v-3.3 h5.5z"/>
<path fill="#aaaaaa" fill-rule="evenodd" d="M57.7,720.1 Q53,715.7 48,715.7 Q40,716.2 40,724.5 Q40.5,731 49,738.5 L57.8,745.6 L67,738.5 Q75.8,731 76,724.5 Q75.8,716.2 67.6,715.7 Q62.6,715.7 57.7,720.1Z M55.8,723.9 h4.4 v3.9 h3.5 v4.3 h-3.5 v3.8 h-4.4 v-3.8 h-3.8 v-4.3 h3.8z"/>
<rect x="42.1" y="782.1" width="3.9" height="29.8" fill="#7a7a7a"/><rect x="46" y="782.1" width="1.9" height="29.8" fill="#c8c8c8"/><rect x="47.9" y="782.1" width="22.1" height="29.8" fill="#a8a8a8"/><rect x="70" y="782.1" width="1.9" height="29.8" fill="#c8c8c8"/><path fill="#858585" d="M71.9,782.1 h2 a3.2,4.5 0 0 1 0,9.2 a3.2,4.5 0 0 1 0,9.6 a3.2,4.5 0 0 1 0,10.9 h-2z"/><ellipse cx="58.8" cy="792.8" rx="4.7" ry="5" fill="#e8e8e8"/><path fill="#e8e8e8" d="M51.7,805.9 L55.5,799.7 L62.2,799.7 L66,805.9Z"/>
<path fill="#a8a8a8" d="M40,854 L64,854 L59,864 L54.8,868.5 L40,857.5Z"/>
<path fill="#a8a8a8" d="M40,861.3 L54.8,872.8 L60.5,867.5 L69.7,872 L69.7,877.7 L40,877.7Z"/>
<path fill="#efefef" stroke="#efefef" stroke-width="2.4" d="M67.2,848.3 Q61.3,848.8 60.6,856 Q60.2,860.5 57.8,863.2 L57.8,863.8 L78.2,863.8 L78.2,863.2 Q75.6,860.5 75.3,856 Q74.6,848.8 68.6,848.3Z"/><path fill="#787878" d="M67.2,848.3 Q61.3,848.8 60.6,856 Q60.2,860.5 57.8,863.2 L57.8,863.8 L78.2,863.8 L78.2,863.2 Q75.6,860.5 75.3,856 Q74.6,848.8 68.6,848.3Z"/><rect x="66.3" y="847.2" width="3.2" height="2.2" rx="1" fill="#787878"/><ellipse cx="67" cy="866.9" rx="2.8" ry="1.6" fill="#787878"/>
<path fill="#a8a8a8" fill-rule="evenodd" d="M43.5,917.9 L68.4,917.9 Q71.9,917.9 71.9,921.4 L71.9,952 L62.7,943.8 L43.5,943.8 Q40,943.8 40,940.3 L40,921.4 Q40,917.9 43.5,917.9Z M56,925.9 Q53.5,923.9 51.5,923.9 Q48,924.2 47.9,928 Q48,931 51,934 L56.1,938 L61,934 Q64,931 64,928 Q63.8,924.2 60.5,923.9 Q58.5,923.9 56,925.9Z"/>
<path fill="none" stroke="#a8a8a8" stroke-width="3.5" d="M59.6,994.5 L48,994.5 L48,1021.9 L74,1021.9 L74,1006.1"/><rect x="46.2" y="992.3" width="13.4" height="6.9" fill="#a8a8a8"/>
<g fill="#8c8c8c"><rect x="54.2" y="1006.1" width="7.6" height="1.8" rx=".8"/><rect x="54.2" y="1010.1" width="11.5" height="1.8" rx=".8"/><rect x="54.2" y="1014.2" width="11.5" height="1.8" rx=".8"/></g>
<path fill="#787878" d="M68.4,986.3 L77.8,990.7 Q75.5,992 73.5,995 L73.4,1000.8 L68.5,999.3 L65.2,1005.2 L64.4,1004.6 L66.8,998.2 L62.7,996.4 Q66,994.8 67.5,992.8Z"/>
<g fill="#a8a8a8"><rect x="42.1" y="1063.9" width="11.8" height="5.6"/><rect x="44" y="1069.5" width="9.9" height="18.1"/><rect x="64.1" y="1063.9" width="11.7" height="5.6"/><rect x="64.1" y="1069.5" width="9.7" height="18.1"/></g>
<rect x="56.1" y="1060" width="5.8" height="27.6" fill="#787878"/><path fill="#8a8a8a" d="M50.1,1058 L58,1058 L59,1060.5 L60,1058 L67.9,1058 Q67.5,1063.5 60,1063.5 L58,1063.5 Q50.5,1063.5 50.1,1058Z"/>
<path fill="#787878" d="M64,1134.5 L74.7,1126 Q77.8,1125.8 79.7,1130.1 L69,1141.8Z"/>
<path fill="#a8a8a8" d="M40,1155.6 Q46,1152 49,1144 Q52,1137 59,1137 Q64,1138 64,1143.4 Q63,1152 55.5,1155.6Z"/>
<path fill="#a8a8a8" fill-rule="evenodd" d="M40.2,1202.2 h37.6 v21.4 h-37.6z M53.9,1206.3 v5.6 h10.1 v-5.6z"/>
<g fill="#787878"><rect x="42.1" y="1194.1" width="9.6" height="5.5" rx="1"/><rect x="54.2" y="1196.2" width="5.4" height="3.4" rx="1"/><rect x="62.4" y="1197.8" width="13.2" height="1.9" rx=".9"/><path d="M66,1197.8 L68,1190.5 L69.3,1190.5 L68.5,1197.8Z M71,1197.8 L74,1190.5 L75.6,1190.8 L72.5,1197.8Z" fill="#999"/></g>
<path fill="none" stroke="#a8a8a8" stroke-width="3.5" d="M53.6,1265.9 L44,1265.9 Q42,1265.9 42,1268 L42,1287.7 Q42,1289.7 44,1289.7 L74,1289.7 Q76,1289.7 76,1287.7 L76,1268 Q76,1265.9 74,1265.9 L64.3,1265.9"/>
<rect x="56.1" y="1262.1" width="5.7" height="7" fill="#a8a8a8"/><rect x="54.2" y="1268.4" width="9.5" height="3.1" rx="1" fill="#888"/>
<g fill="#787878"><circle cx="51.7" cy="1276" r="3.8"/><path d="M46,1285.5 Q47.5,1281.9 51.7,1281.9 Q55.9,1281.9 57.4,1285.5Z"/><rect x="60.2" y="1274" width="11.3" height="3.6" rx="1.2"/><rect x="60.2" y="1280" width="11.3" height="3.6" rx="1.2"/></g>
<rect x="38.2" y="1330" width="39.6" height="31.9" fill="#ebebeb"/>
<path fill="none" stroke="#ababab" stroke-width="3.2" d="M50,1358 L45,1358 Q40.1,1357 40.1,1350 A18,18 0 0 1 76.2,1350 Q76.2,1357 71.3,1358 L66,1358"/>
<circle cx="57.7" cy="1355.4" r="3.9" fill="#ababab"/><path fill="#ababab" d="M55,1353.5 L66.6,1341.5 L67.6,1342.5 L60,1357Z"/>
<g stroke="#b5b5b5" stroke-width="1.8" stroke-linecap="round"><line x1="46" y1="1347.2" x2="48" y2="1348.5"/><line x1="50.5" y1="1341" x2="51.8" y2="1342.8"/><line x1="56.8" y1="1337.3" x2="57.1" y2="1340"/></g>
<path fill="#a8a8a8" d="M58.5,1404.1 L75.8,1404.1 Q77.8,1404.1 77.8,1406.5 L77.8,1423.5 Q77.8,1425.8 75.8,1425.8 L58.5,1425.8Z"/><rect x="71.9" y="1404.1" width="2.2" height="21.7" fill="#c8c8c8"/>
<path fill="none" stroke="#a8a8a8" stroke-width="2.2" d="M57.9,1404 L57.9,1400.3 Q57.9,1398.9 59.4,1398.9 L66.9,1398.9 Q68.4,1398.9 68.4,1400.3 L68.4,1404" stroke-width="2.4"/>
<circle cx="50.8" cy="1416.7" r="12.2" fill="#f0f0f0"/><circle cx="50.8" cy="1416.7" r="9" fill="none" stroke="#7a7a7a" stroke-width="3.2"/>
<path fill="none" stroke="#7a7a7a" stroke-width="2.2" d="M51,1412.3 L51,1417.4 L55.8,1417.4"/>
<circle cx="58.9" cy="1482.9" r="13.4" fill="none" stroke="#777" stroke-width="2.8"/><rect x="54.2" y="1462.1" width="9.6" height="3.8" rx=".8" fill="#777"/>
<rect x="68.5" y="1469" width="5.5" height="3" rx=".8" fill="#777" transform="rotate(40 71.2 1470.5)"/>
<path fill="none" stroke="#999" stroke-width="1.8" d="M59,1474.2 L59,1483 L65.9,1483"/>
<path fill="#a8a8a8" d="M38.5,1538.9 L56.7,1530.1 L75.6,1538.9 L56.7,1547.4Z"/>
<path fill="#a8a8a8" d="M46,1546 L56.7,1551.3 L67.8,1546 L67.8,1552 Q66,1557.8 56.9,1557.8 Q48,1557.8 46,1552Z"/>
<path fill="none" stroke="#e2e2e2" stroke-width="1.8" d="M56,1538.5 L68.5,1541.5 L69.5,1544"/>
<path fill="#888" d="M70.2,1540.5 L72,1540.5 L72.5,1548 Q74.5,1550 74.3,1556 Q73.5,1559.7 72.6,1559.7 L71.5,1559.7 Q70.5,1553 71,1548Z"/>
<defs><filter id="sh" x="-5%" y="-50%" width="110%" height="200%"><feDropShadow dx="1" dy="1.5" stdDeviation="1.2" flood-color="#000" flood-opacity="0.35"/></filter></defs>
<rect x="40" y="547" width="267" height="7.6" rx="1" fill="#e955f2" filter="url(#sh)"/>
<rect x="523" y="525" width="163" height="7.6" rx="1" fill="#e955f2" filter="url(#sh)"/>
<polygon fill="#e955f2" filter="url(#sh)" points="1265.4,589.8 1312.8,559.9 1312.8,583.9 1453.8,587 1453.8,592.6 1312.8,596.3 1312.8,619.6"/>
<polygon fill="#555" points="1174,516 1182,507.5 1190,516"/>
</svg>
</body></html>
